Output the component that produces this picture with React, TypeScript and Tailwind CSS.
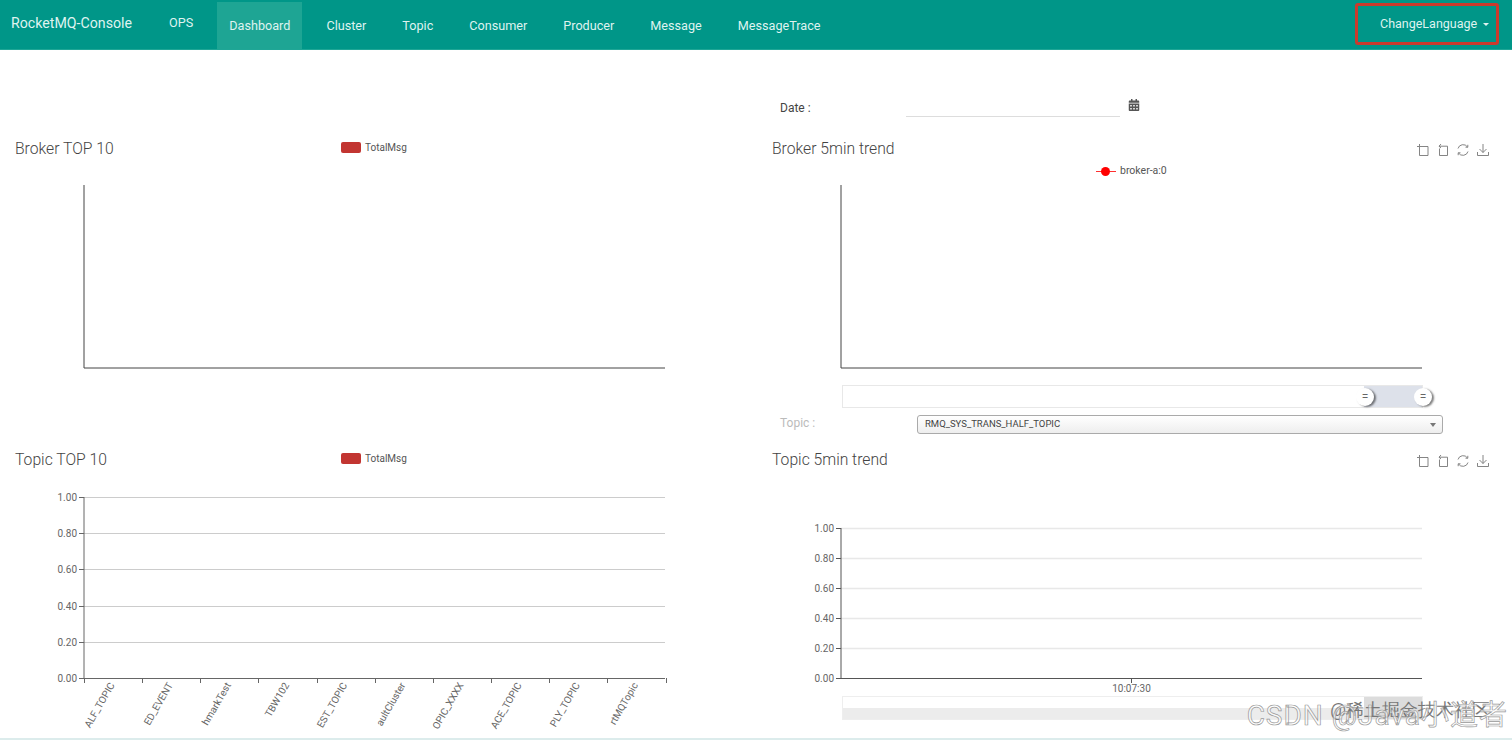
import { FaCalendarAlt } from "react-icons/fa";

const navLinks = ["Cluster", "Topic", "Consumer", "Producer", "Message", "MessageTrace"];
const topicLabels = ["ALF_TOPIC", "ED_EVENT", "hmarkTest", "TBW102", "EST_TOPIC", "aultCluster", "OPIC_XXXX", "ACE_TOPIC", "PLY_TOPIC", "rtMQTopic"];

const Legend = () => (
  <div className="flex items-center gap-1 text-[10px] text-[#555]">
    <span className="w-5 h-[11px] rounded-[2px] bg-[#c23531]" />
    <span>TotalMsg</span>
  </div>
);

const Toolbox = () => (
  <div className="flex gap-[6px] text-[#777]">
    <svg width="14" height="14" viewBox="0 0 14 14" fill="none" stroke="currentColor" strokeWidth="0.9">
      <path d="M1 3.5H3.5V1M3.5 3.5H12V12.5H3.5V3.5" />
    </svg>
    <svg width="14" height="14" viewBox="0 0 14 14" fill="none" stroke="currentColor" strokeWidth="0.9">
      <path d="M5 1L3 3.2L5 5M3 3.2H11.5V12.5H3.5V5.5" />
    </svg>
    <svg width="14" height="14" viewBox="0 0 14 14" fill="none" stroke="currentColor" strokeWidth="0.9">
      <path d="M2 5.5A5.3 5.3 0 0 1 11.5 4M12 8.5A5.3 5.3 0 0 1 2.5 10M9.5 4.2H11.8V1.8M4.5 9.8H2.2V12.2" />
    </svg>
    <svg width="14" height="14" viewBox="0 0 14 14" fill="none" stroke="currentColor" strokeWidth="0.9">
      <path d="M7 1V9.5M3.5 6L7 9.5L10.5 6M1.5 9V12.5H12.5V9" />
    </svg>
  </div>
);

const EmptyAxes = () => (
  <svg width="757" height="200" className="block">
    <path d="M84 5V188H665" fill="none" stroke="#444" />
  </svg>
);

const GridChart = ({ top, bottom, lineColor, lineWidth, axisColor, children }: { top: number; bottom: number; lineColor: string; lineWidth: number; axisColor: string; children: React.ReactNode }) => {
  const ticks = ["1.00", "0.80", "0.60", "0.40", "0.20", "0.00"];
  return (
    <svg width="757" height="258" className="block">
      {ticks.map((tick, i) => {
        const y = Math.round(top + ((bottom - top) * i) / 5) + 0.5;
        return (
          <g key={tick}>
            {i < 5 && <line x1="84" x2="665" y1={y} y2={y} stroke={lineColor} strokeWidth={lineWidth} />}
            <line x1="79" x2="84" y1={y} y2={y} stroke={axisColor} />
            <text x="77" y={y + 3.5} textAnchor="end" fontSize="10" fill="#666" fontFamily="Roboto, sans-serif">{tick}</text>
          </g>
        );
      })}
      <path d={`M84 ${top}V${bottom + 0.5}H665`} fill="none" stroke={axisColor} />
      {children}
    </svg>
  );
};

const Handle = ({ className }: { className: string }) => (
  <span className={`absolute top-[2px] flex h-[18px] w-[18px] items-center justify-center rounded-full bg-white text-[12px] leading-none text-[#666] shadow-[2px_1px_2px_rgba(0,0,0,0.5)] ${className}`}>
    =
  </span>
);

export default function App() {
  return (
    <div className="relative h-[740px] w-[1512px] overflow-hidden bg-white font-['Roboto',sans-serif]">
      <nav className="flex h-[50px] items-start justify-between border-b border-[#1fa696] bg-[#009688] text-[12.65px] text-[#dff3f0]">
        <div className="flex h-[49px]">
          <a className="flex h-[47px] items-center pl-[11px] text-[14.2px]">RocketMQ-Console</a>
          <a className="ml-[25px] flex h-[47px] items-center px-3">OPS</a>
          <a className="ml-3 mt-[2px] flex items-center bg-[#1ea594] px-3 pt-[1px]">Dashboard</a>
          {navLinks.map((link) => (
            <a key={link} className="ml-3 mt-[2px] flex items-center px-3 pt-[1px]">{link}</a>
          ))}
        </div>
        <div className="mr-[13px] mt-[3px] flex h-[42px] w-[144px] items-center gap-[6px] rounded-[3px] border-[3px] border-[#cb3a2d] pl-[22px]">
          <span className="text-[12.5px]">ChangeLanguage</span>
          <span className="h-0 w-0 border-x-[3px] border-t-[3px] border-x-transparent border-t-[#dff3f0]" />
        </div>
      </nav>

      <main className="grid grid-cols-[757px_755px]">
        <section>
          <div className="mt-[87px] flex h-[23px] items-center">
            <h2 className="w-[341px] pl-[15px] text-[15.7px] font-light text-[#444]">Broker TOP 10</h2>
            <div className="-mt-[2px]"><Legend /></div>
          </div>
          <div className="mt-5"><EmptyAxes /></div>
          <div className="mt-[69px] flex h-[22px] items-center">
            <h2 className="w-[341px] pl-[15px] text-[15.7px] font-light text-[#444]">Topic TOP 10</h2>
            <div className="-mt-[4px]"><Legend /></div>
          </div>
          <div className="mt-[9px]">
            <GridChart top={17} bottom={198} lineColor="#ccc" lineWidth={1} axisColor="#666">
              {Array.from({ length: 11 }, (_, i) => {
                const x = Math.round(84 + 58.15 * i) + 0.5;
                return <line key={i} x1={x} x2={x} y1="198" y2="203" stroke="#666" />;
              })}
              {topicLabels.map((label, i) => {
                const x = 115 + 58.15 * i;
                return (
                  <text key={label} x={x} y="205" textAnchor="end" fontSize="10" fill="#666" transform={`rotate(-60 ${x} 205)`} fontFamily="Roboto, sans-serif">
                    {label}
                  </text>
                );
              })}
            </GridChart>
          </div>
        </section>

        <section>
          <div className="flex h-[87px] items-start">
            <span className="ml-[23px] mt-[49px] text-[12px] text-[#444]">Date :</span>
            <span className="ml-[95px] mt-[45px] h-[22px] w-[214px] border-b border-[#ddd]" />
            <FaCalendarAlt className="ml-2 mt-[49px] text-[12px] text-[#555]" />
          </div>
          <div className="flex h-[23px] items-center justify-between pl-[15px] pr-[22px]">
            <h2 className="text-[15.7px] font-light text-[#444]">Broker 5min trend</h2>
            <div className="mt-[3px]"><Toolbox /></div>
          </div>
          <div className="flex h-5 items-center pl-[339px] pt-[2px] text-[10.5px] text-[#555]">
            <span className="relative mr-1 h-px w-5 bg-[#ff3030]">
              <span className="absolute left-[5px] -top-[4px] h-[9px] w-[9px] rounded-full bg-[#ff0000]" />
            </span>
            broker-a:0
          </div>
          <EmptyAxes />
          <div className="relative ml-[85px] mt-[5px] h-[23px] w-[581px] border border-[#e8e8e8]">
            <span className="absolute inset-y-0 right-0 w-[58px] bg-[#dde1ea]" />
            <Handle className="left-[513px]" />
            <Handle className="left-[571px]" />
          </div>
          <div className="mt-[7px] flex h-[19px] items-center">
            <span className="ml-[23px] -mt-[3px] w-[137px] text-[12px] text-[#bbb]">Topic :</span>
            <div className="flex h-[19px] w-[526px] items-center justify-between rounded-[3px] border border-[#aaa] bg-gradient-to-b from-white to-[#eee] pl-[7px] pr-[6px] text-[9.5px] text-[#444]">
              <span>RMQ_SYS_TRANS_HALF_TOPIC</span>
              <span className="h-0 w-0 border-x-[3px] border-t-[4px] border-x-transparent border-t-[#777]" />
            </div>
          </div>
          <div className="mt-[15px] flex h-[22px] items-center justify-between pl-[15px] pr-[22px]">
            <h2 className="text-[15.7px] font-light text-[#444]">Topic 5min trend</h2>
            <div className="mt-[2px]"><Toolbox /></div>
          </div>
          <div className="mt-[9px] h-[216px] overflow-hidden">
            <GridChart top={48} bottom={198} lineColor="#e8e8e8" lineWidth={1.5} axisColor="#555">
              <line x1="374.5" x2="374.5" y1="198" y2="203" stroke="#555" />
              <text x="374.5" y="212" textAnchor="middle" fontSize="10" fill="#666" fontFamily="Roboto, sans-serif">10:07:30</text>
            </GridChart>
          </div>
          <div className="relative ml-[85px] flex h-[24px] w-[581px] flex-col border border-[#eee]">
            <div className="flex-1 bg-white" />
            <div className="flex-1 bg-[#ececec]" />
            <span className="absolute inset-y-0 right-0 w-[58px] bg-[#dcdcdc]" />
          </div>
        </section>
      </main>

      <span className="absolute right-[22px] top-[697px] text-[17.5px] text-[#777]">@稀土掘金技术社区</span>
      <span className="absolute right-[4px] top-[695px] font-['Roboto','Noto_Sans_CJK_SC',sans-serif] text-[28px] tracking-[1px] text-white/60 [-webkit-text-stroke:0.7px_#999]">CSDN @Java小道者</span>
      <div className="absolute inset-x-0 bottom-0 h-[2px] bg-[#dcecec]" />
    </div>
  );
}
